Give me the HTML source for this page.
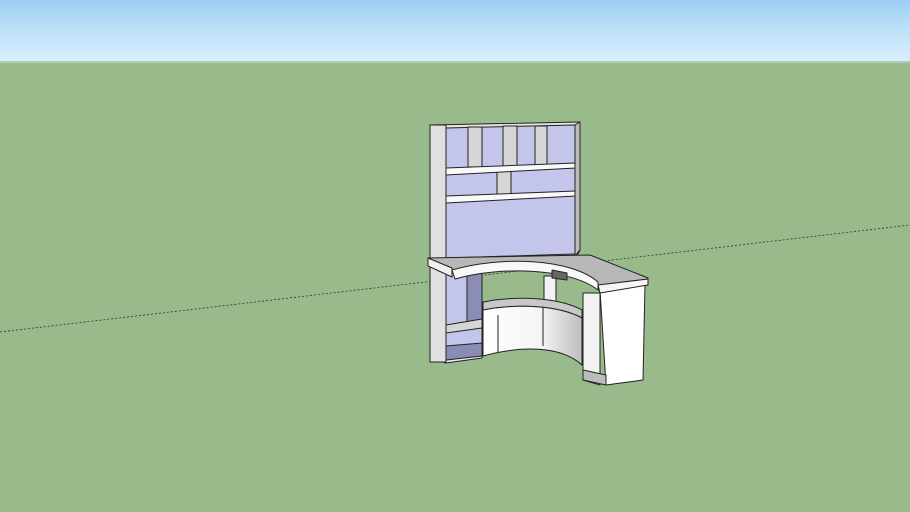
<!DOCTYPE html>
<html><head><meta charset="utf-8"><style>html,body{margin:0;padding:0;width:910px;height:512px;overflow:hidden}</style></head>
<body>
<svg width="910" height="512" viewBox="0 0 910 512" xmlns="http://www.w3.org/2000/svg">
<defs>
<linearGradient id="sky" x1="0" y1="0" x2="0" y2="1">
<stop offset="0" stop-color="#9ccdf3"/><stop offset="0.5" stop-color="#bfe2fa"/><stop offset="1" stop-color="#d9effc"/>
</linearGradient>
<linearGradient id="curve" x1="0" y1="0" x2="1" y2="0">
<stop offset="0" stop-color="#ffffff"/><stop offset="0.6" stop-color="#f4f4f4"/><stop offset="1" stop-color="#bdbdbd"/>
</linearGradient>
</defs>
<rect width="910" height="62" fill="url(#sky)"/>
<rect y="61" width="910" height="2" fill="#b0ccb0"/>
<rect y="63" width="910" height="449" fill="#99bb8b"/>
<line x1="0" y1="332" x2="910" y2="225" stroke="#333" stroke-width="0.8" stroke-dasharray="2,2"/>
<g stroke="#222" stroke-width="1" stroke-linejoin="round">
<polygon points="430,125 580,122 580,250 575,260 446,263 430,262" fill="#e4e4e4"/>
<polygon points="446,128 575,125 575,258 446,261" fill="#c3c5ea"/>
<rect x="468" y="127" width="14" height="40" fill="#d6d6d6"/>
<rect x="503" y="126" width="14" height="40" fill="#d6d6d6"/>
<rect x="535" y="126" width="12" height="40" fill="#d6d6d6"/>
<rect x="497" y="171" width="14" height="25" fill="#d6d6d6"/>
<polygon points="446,168 576,163 576,168 446,175" fill="#fafafa"/>
<polygon points="446,196 576,191 576,196 446,203" fill="#fafafa"/>
<rect x="430" y="125" width="16" height="137" fill="#e0e0e0"/>
<polygon points="575,125 580,122 580,250 575,256" fill="#bdbdbd"/>
<polygon points="446,258 575,254 575,260 446,263" fill="#d0d0d0"/>
<polygon points="430,262 482,262 482,358 446,363 430,358" fill="#e8e8e8"/>
<polygon points="446,270 482,268 482,355 446,360" fill="#c3c5ea"/>
<polygon points="467,270 482,268 482,320 467,322" fill="#8a8db5"/>
<polygon points="446,325 482,319 482,328 446,333" fill="#d6d6d6"/>
<polygon points="446,346 482,343 482,356 446,360" fill="#8a8db5"/>
<rect x="430" y="262" width="16" height="100" fill="#e0e0e0"/>
<path d="M428,258 L590,255 L648,278 L648,285 L600,293 L598,285 C570,262 500,262 455,275 L452,270 L428,264 Z" fill="#b8b8b8"/>
<path d="M452,270 C500,256 570,258 598,282 L598,290 C570,268 500,266 455,279 Z" fill="#f8f8f8"/>
<polygon points="428,258 452,268 452,277 428,266" fill="#f0f0f0"/>
<rect x="544" y="276" width="12" height="26" fill="#f2f2f2"/>
<polygon points="552,270 567,273 567,280 552,278" fill="#666"/>
<path d="M483,302 C520,295 560,298 582,310 L582,318 C560,306 520,303 483,310 Z" fill="#c8c8c8"/>
<path d="M483,310 C520,303 560,306 582,318 L582,365 C560,345 520,346 483,356 Z" fill="url(#curve)"/>
<line x1="498" y1="315" x2="498" y2="352"/>
<line x1="543" y1="307" x2="543" y2="346"/>
<polygon points="583,293 600,293 600,385 583,380" fill="#f2f2f2"/>
<polygon points="600,290 645,284 643,380 606,385" fill="#ffffff"/>
<polygon points="583,370 606,375 606,385 583,380" fill="#bcbcbc"/>
<polygon points="598,285 648,279 648,285 600,293" fill="#f6f6f6"/>
</g>
</svg>
</body></html>
